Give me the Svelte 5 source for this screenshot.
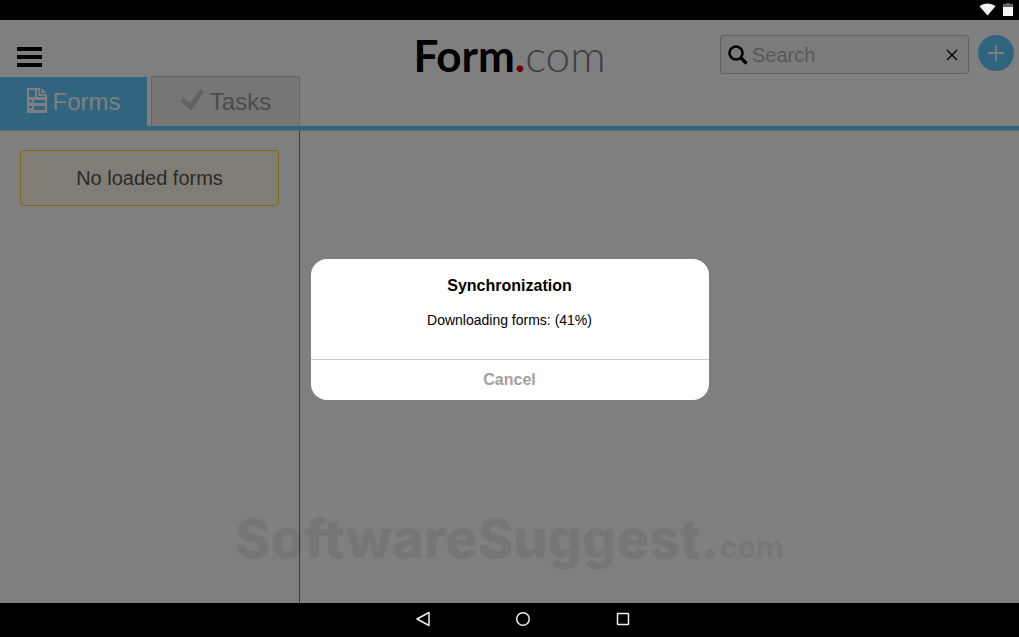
<script>
  let search = "";
  let tab = "forms";
  let progress = 41;
  let syncing = true;

  function cancelSync() {
    syncing = false;
  }
</script>

<div class="screen">
  <div class="status">
    <svg width="17" height="13" viewBox="0 0 17 13" aria-hidden="true">
      <path d="M8.500 12.500L.5 3.200C5-.5 12-.5 16.500 3.200Z" fill="#f0f0f0" />
    </svg>
    <svg width="10" height="13" viewBox="0 0 10 13" aria-hidden="true">
      <path d="M3 0h4v1h3v3H0V1h3Z" fill="#666" />
      <path d="M0 4h10v9H0Z" fill="#f4f4f4" />
    </svg>
  </div>

  <div class="app">
    <header>
      <div class="top">
        <button class="menu" aria-label="Menu">
          <span></span>
          <span></span>
          <span></span>
        </button>

        <div class="logo"><b>Form</b><b class="dot">.</b><span>com</span></div>

        <div class="tools">
          <div class="search">
            <svg width="20" height="20" viewBox="0 0 20 20" aria-hidden="true">
              <circle cx="8" cy="8" r="6.500" fill="none" stroke="#000" stroke-width="2.600" />
              <path d="M12.500 12.500L18.500 18.500" stroke="#000" stroke-width="3.400" />
            </svg>
            <input type="text" placeholder="Search" aria-label="Search" bind:value={search} />
            <button class="clear" aria-label="Clear" on:click={() => (search = "")}>
              <svg width="12" height="12" viewBox="0 0 12 12">
                <path d="M1 1L11 11M11 1L1 11" stroke="#000" stroke-width="1.300" />
              </svg>
            </button>
          </div>
          <button class="add" aria-label="Add">
            <svg width="16" height="16" viewBox="0 0 16 16">
              <path d="M8 0V16M0 8H16" stroke="#fff" stroke-width="1.800" />
            </svg>
          </button>
        </div>
      </div>

      <nav class="tabs">
        <button class="tab" class:active={tab === "forms"} on:click={() => (tab = "forms")}>
          <svg width="20" height="25" viewBox="0 0 20 25" aria-hidden="true">
            <path
              d="M0 0H13V6H20V25H0ZM2 2V9H8V2ZM10 2V9H18V8H11.500V2ZM2 12V14H5V12ZM7 12V15H18V12ZM2 18V20H5V18ZM7 18V22H18V18Z"
              fill="currentColor"
              fill-rule="evenodd"
            />
            <path d="M14 0L20 5H14Z" fill="currentColor" />
          </svg>
          Forms
        </button>
        <button class="tab" class:active={tab === "tasks"} on:click={() => (tab = "tasks")}>
          <svg width="24" height="22" viewBox="0 0 24 22" aria-hidden="true">
            <path d="M0 12L3.500 9L10 14L20.500 0L24 2.500L11.500 21.500Z" fill="#c4c4c4" />
          </svg>
          Tasks
        </button>
      </nav>
    </header>

    <main>
      <aside>
        <div class="empty">No loaded forms</div>
      </aside>
      <section></section>
    </main>

    {#if syncing}
      <div class="overlay">
        <div class="dialog" role="dialog" aria-labelledby="sync-title">
          <div class="message">
            <h2 id="sync-title">Synchronization</h2>
            <p>Downloading forms: ({progress}%)</p>
          </div>
          <button class="cancel" on:click={cancelSync}>Cancel</button>
        </div>
      </div>
    {/if}

    <div class="watermark">SoftwareSuggest.<small>com</small></div>
  </div>

  <div class="navbar">
    <button aria-label="Back">
      <svg width="16" height="16" viewBox="0 0 16 16">
        <path d="M14 1.500V14.500L2 8Z" fill="none" stroke="#eee" stroke-width="1.500" stroke-linejoin="round" />
      </svg>
    </button>
    <button aria-label="Home">
      <svg width="16" height="16" viewBox="0 0 16 16">
        <circle cx="8" cy="8" r="6.300" fill="none" stroke="#eee" stroke-width="1.500" />
      </svg>
    </button>
    <button aria-label="Recent">
      <svg width="16" height="16" viewBox="0 0 16 16">
        <rect x="2.500" y="2.500" width="11" height="11" rx=".5" fill="none" stroke="#eee" stroke-width="1.500" />
      </svg>
    </button>
  </div>
</div>

<style>
  .screen {
    display: flex;
    flex-direction: column;
    min-height: 100vh;
    background: #fff;
    font-family: "Liberation Sans", Arial, sans-serif;
  }

  button {
    padding: 0;
    border: none;
    background: none;
    font-family: inherit;
    cursor: pointer;
  }

  svg {
    display: block;
    flex: none;
  }

  .status {
    display: flex;
    align-items: center;
    justify-content: flex-end;
    gap: 7px;
    box-sizing: border-box;
    height: 20px;
    padding: 0 6px 2px 0;
    background: #000;
  }

  .app {
    position: relative;
    flex: 1;
    display: flex;
    flex-direction: column;
  }

  header {
    border-bottom: 1px solid #d4d4d4;
  }

  .top {
    display: grid;
    grid-template-columns: 1fr auto 1fr;
    align-items: start;
    height: 41px;
    padding: 15px 5px 0;
  }

  .menu {
    display: flex;
    flex-direction: column;
    gap: 4px;
    width: 25px;
    margin: 12px 0 0 12px;
  }

  .menu span {
    height: 4px;
    background: #000;
  }

  .logo {
    font-family: Lato, sans-serif;
    font-size: 44px;
    line-height: 40px;
    color: #000;
  }

  .logo span {
    font-weight: 300;
    color: #808080;
  }

  .logo .dot {
    color: #e00000;
  }

  .tools {
    display: flex;
    justify-content: flex-end;
    gap: 9px;
  }

  .search {
    display: flex;
    align-items: center;
    gap: 4px;
    box-sizing: border-box;
    width: 249px;
    height: 39px;
    padding: 0 10px 0 7px;
    border: 1px solid #c0c0c0;
    border-radius: 3px;
    background: #f6f6f6;
  }

  .search input {
    flex: 1;
    min-width: 0;
    padding: 2px 0 0;
    border: none;
    outline: none;
    background: none;
    font-family: inherit;
    font-size: 20px;
    color: #333;
  }

  .search input::placeholder {
    color: #b0b0b0;
    opacity: 1;
  }

  .add {
    display: flex;
    align-items: center;
    justify-content: center;
    width: 36px;
    height: 36px;
    border-radius: 50%;
    background: #60c8ff;
  }

  .tabs {
    display: flex;
    align-items: flex-end;
    gap: 4px;
    border-bottom: 4px solid #60c8ff;
  }

  .tab {
    display: flex;
    align-items: center;
    justify-content: center;
    gap: 6px;
    box-sizing: border-box;
    width: 149px;
    height: 50px;
    border: 1px solid #c8c8c8;
    border-bottom: none;
    background: #ececec;
    font-size: 24px;
    color: #999;
  }

  .tab svg {
    margin-bottom: 3px;
  }

  .tab.active {
    width: 147px;
    height: 49px;
    border: none;
    background: #60c8ff;
    color: #fff;
  }

  main {
    flex: 1;
    display: flex;
  }

  aside {
    box-sizing: border-box;
    width: 300px;
    padding: 19px 20px;
    border-right: 1px solid #707070;
  }

  section {
    flex: 1;
  }

  .empty {
    padding: 15px 0;
    border: 1px solid #fdd020;
    border-radius: 4px;
    background: #fffbec;
    font-size: 20px;
    line-height: 24px;
    text-align: center;
    color: #555;
  }

  .overlay {
    position: absolute;
    inset: 0;
    display: flex;
    align-items: center;
    justify-content: center;
    padding-top: 36px;
    background: rgba(0, 0, 0, 0.5);
  }

  .dialog {
    width: 398px;
    max-width: 90%;
    border-radius: 16px;
    background: #fff;
    text-align: center;
    overflow: hidden;
  }

  .message {
    padding: 17px 16px 29px;
  }

  h2 {
    margin: 0 0 14px;
    font-size: 16px;
    line-height: 20px;
    color: #000;
  }

  p {
    margin: 0;
    font-size: 14px;
    line-height: 20px;
    color: #000;
  }

  .cancel {
    width: 100%;
    height: 41px;
    border-top: 1px solid #ccc;
    font-size: 16px;
    font-weight: bold;
    color: #a0a0a0;
  }

  .watermark {
    position: absolute;
    right: 0;
    bottom: 26px;
    left: 0;
    font-family: Inter, sans-serif;
    font-size: 54px;
    font-weight: 800;
    line-height: 60px;
    text-align: center;
    color: rgba(0, 0, 0, 0.07);
    pointer-events: none;
  }

  .watermark small {
    font-size: 30px;
  }

  .navbar {
    display: flex;
    align-items: center;
    justify-content: center;
    gap: 84px;
    box-sizing: border-box;
    height: 34px;
    padding: 0 0 2px 26px;
    background: #000;
  }
</style>
